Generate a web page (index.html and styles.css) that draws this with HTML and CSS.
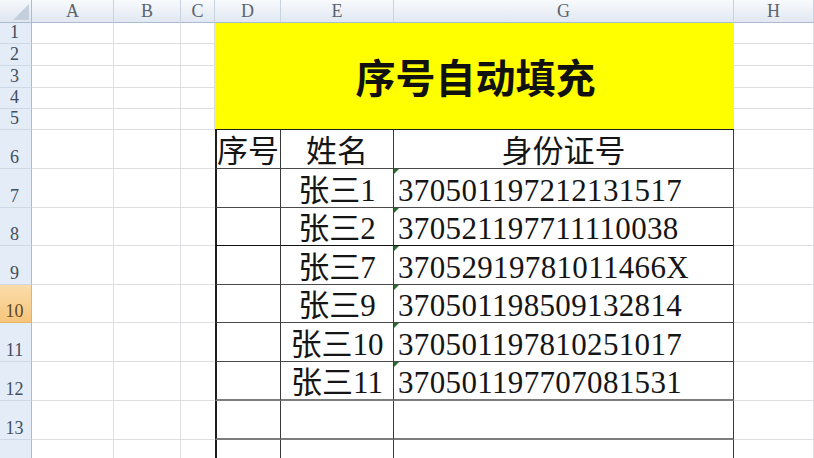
FILE: index.html
```html
<!DOCTYPE html>
<html lang="zh-CN">
<head>
<meta charset="utf-8">
<title>序号自动填充</title>
<link rel="stylesheet" href="styles.css">
</head>
<body>
<div class="sheet">
  <div class="corner"><svg class="corner-tri" width="16" height="16" viewBox="0 0 16 16"><polygon points="16,0 16,16 0,16" fill="#c3cfdd"/></svg></div>
  <div class="colh">A</div>
  <div class="colh">B</div>
  <div class="colh">C</div>
  <div class="colh">D</div>
  <div class="colh">E</div>
  <div class="colh">G</div>
  <div class="colh">H</div>

  <div class="title">序号自动填充</div>

  <div class="rowh">1</div><div></div><div></div><div></div><div></div>
  <div class="rowh">2</div><div></div><div></div><div></div><div></div>
  <div class="rowh">3</div><div></div><div></div><div></div><div></div>
  <div class="rowh">4</div><div></div><div></div><div></div><div></div>
  <div class="rowh">5</div><div></div><div></div><div></div><div></div>

  <div class="rowh">6</div><div></div><div></div><div class="cl"></div>
  <div class="t d l1">序号</div><div class="t e c">姓名</div><div class="t g c">身份证号</div><div></div>

  <div class="rowh">7</div><div></div><div></div><div class="cl"></div>
  <div class="t d"></div><div class="t e c">张三1</div><div class="t g l tri">370501197212131517</div><div></div>

  <div class="rowh">8</div><div></div><div></div><div class="cl"></div>
  <div class="t d dk"></div><div class="t e c dk">张三2</div><div class="t g l tri dk">370521197711110038</div><div></div>

  <div class="rowh">9</div><div></div><div></div><div class="cl"></div>
  <div class="t d"></div><div class="t e c">张三7</div><div class="t g l tri">37052919781011466X</div><div></div>

  <div class="rowh sel">10</div><div></div><div></div><div class="cl"></div>
  <div class="t d"></div><div class="t e c">张三9</div><div class="t g l tri">370501198509132814</div><div></div>

  <div class="rowh">11</div><div></div><div></div><div class="cl"></div>
  <div class="t d"></div><div class="t e c">张三10</div><div class="t g l tri">370501197810251017</div><div></div>

  <div class="rowh">12</div><div></div><div></div><div class="cl"></div>
  <div class="t d gr"></div><div class="t e c gr">张三11</div><div class="t g l tri gr">370501197707081531</div><div></div>

  <div class="rowh">13</div><div></div><div></div><div class="cl"></div>
  <div class="t d gr"></div><div class="t e gr"></div><div class="t g gr"></div><div></div>

  <div class="rowh"></div><div></div><div></div><div class="cl"></div>
  <div class="t d"></div><div class="t e"></div><div class="t g"></div><div></div>
</div>
</body>
</html>
```

FILE: styles.css
```css
html, body {
  margin: 0;
  padding: 0;
  background: #ffffff;
}

body {
  width: 814px;
  height: 458px;
  overflow: hidden;
}

.sheet {
  display: grid;
  grid-template-columns: 32px 82px 67px 34px 66px 113px 340px 80px;
  grid-template-rows: 23px 21px 22px 22px 21px 21px 39px 39px 38px 39px 38px 39px 39px 39px 39px;
}

.sheet > div {
  box-sizing: border-box;
  min-width: 0;
  border-right: 1px solid #dcdee1;
  border-bottom: 1px solid #dcdee1;
}

/* headers */
.sheet > .corner {
  background: linear-gradient(#f6f8fb, #dfe6ef);
  border-right-color: #a9bcd2;
  border-bottom-color: #a9bcd2;
  display: flex;
  align-items: flex-end;
  justify-content: flex-end;
  padding: 0 2px 2px 0;
}

.corner-tri {
  display: block;
}

.sheet > .colh {
  background: linear-gradient(#f8fafd, #e1e8f1);
  border-right-color: #c9d3df;
  border-bottom-color: #a9bcd2;
  display: flex;
  align-items: flex-end;
  justify-content: center;
  font: 18px/20px "Liberation Serif", serif;
  color: #5a646f;
  padding-bottom: 1px;
}

.sheet > .rowh {
  background: #e4ecf7;
  border-right-color: #a9bcd2;
  border-bottom-color: #cfd9e6;
  display: flex;
  align-items: flex-end;
  justify-content: center;
  font: 18px/18px "Liberation Serif", serif;
  color: #414e5e;
  padding: 0 2px 2px 0;
}

.sheet > .rowh.sel {
  background: linear-gradient(#fbdcaa, #f6c57c);
  color: #5e4726;
  border-bottom-color: #e7b56d;
}

/* title */
.sheet > .title {
  grid-column: 5 / 8;
  grid-row: 2 / 7;
  background: #ffff00;
  border-right: 0;
  border-bottom: 1px solid #1e1e1e;
  display: flex;
  align-items: center;
  justify-content: center;
  font: 700 40px/1 "Noto Sans CJK SC", sans-serif;
  color: #111111;
  padding-left: 2px;
}

/* table */
.sheet > .cl {
  border-right-color: transparent;
}

.sheet > .t {
  position: relative;
  display: flex;
  align-items: flex-end;
  font: 31px/31px "Liberation Serif", "Noto Sans CJK SC", serif;
  color: #151515;
  white-space: nowrap;
  padding-bottom: 1px;
  border-bottom-color: #4a4a4a;
  border-right-color: #3a3a3a;
}

.sheet > .t.d {
  border-left: 2px solid #1e1e1e;
}

.sheet > .t.c {
  justify-content: center;
}

.sheet > .t.l {
  padding-left: 4px;
  letter-spacing: 0.35px;
}

.sheet > .t.l1 {
  padding-left: 0;
}

.sheet > .t.dk {
  border-bottom-color: #111111;
}

.sheet > .t.gr {
  border-bottom: 2px solid #7d7d7d;
}

.tri::before {
  content: "";
  position: absolute;
  left: 0;
  top: 0;
  border-top: 5px solid #2c6a2f;
  border-right: 5px solid transparent;
}
```
